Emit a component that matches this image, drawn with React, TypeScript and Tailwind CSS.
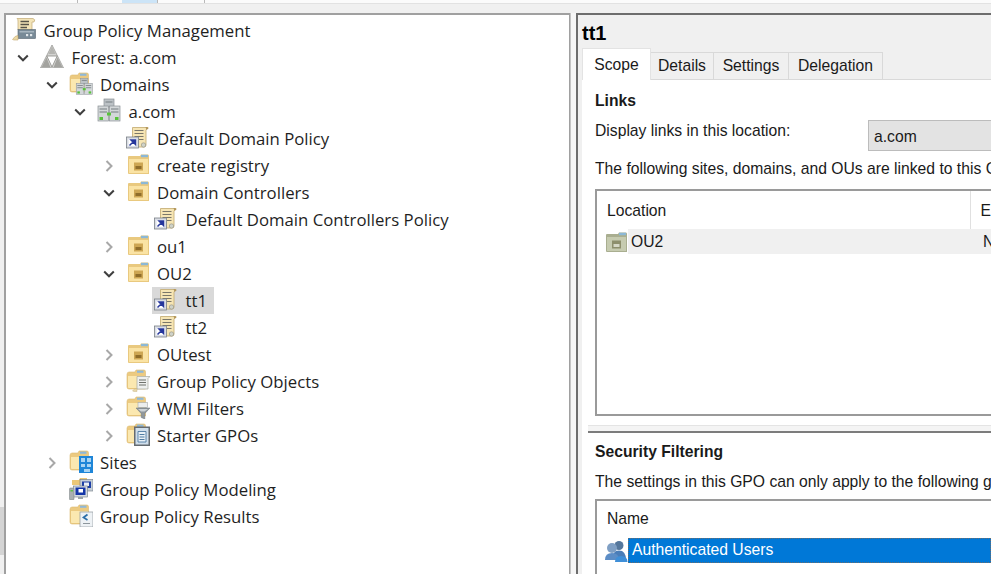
import type { ReactNode } from "react";

type Kind = "root" | "forest" | "domains" | "domain" | "gpo" | "ou" | "gpos" | "wmi" | "starter" | "sites" | "modeling" | "results";

type Node = {
  label: string;
  depth: number;
  kind: Kind;
  arrow?: "open" | "closed";
  selected?: boolean;
};

const NODES: Node[] = [
  { label: "Group Policy Management", depth: -1, kind: "root" },
  { label: "Forest: a.com", depth: 0, kind: "forest", arrow: "open" },
  { label: "Domains", depth: 1, kind: "domains", arrow: "open" },
  { label: "a.com", depth: 2, kind: "domain", arrow: "open" },
  { label: "Default Domain Policy", depth: 3, kind: "gpo" },
  { label: "create registry", depth: 3, kind: "ou", arrow: "closed" },
  { label: "Domain Controllers", depth: 3, kind: "ou", arrow: "open" },
  { label: "Default Domain Controllers Policy", depth: 4, kind: "gpo" },
  { label: "ou1", depth: 3, kind: "ou", arrow: "closed" },
  { label: "OU2", depth: 3, kind: "ou", arrow: "open" },
  { label: "tt1", depth: 4, kind: "gpo", selected: true },
  { label: "tt2", depth: 4, kind: "gpo" },
  { label: "OUtest", depth: 3, kind: "ou", arrow: "closed" },
  { label: "Group Policy Objects", depth: 3, kind: "gpos", arrow: "closed" },
  { label: "WMI Filters", depth: 3, kind: "wmi", arrow: "closed" },
  { label: "Starter GPOs", depth: 3, kind: "starter", arrow: "closed" },
  { label: "Sites", depth: 1, kind: "sites", arrow: "closed" },
  { label: "Group Policy Modeling", depth: 1, kind: "modeling" },
  { label: "Group Policy Results", depth: 1, kind: "results" },
];

function Svg({ children }: { children: ReactNode }) {
  return (
    <svg viewBox="0 0 24 24" className="mb-[4px] size-6 shrink-0">
      {children}
    </svg>
  );
}

function Folder() {
  return (
    <>
      <path d="M1 6.5Q1 4 3 4H9L10 2H18Q19.5 2 19.5 4V21H3Q1 21 1 19Z" fill="#ecca80" stroke="#dcb96e" strokeWidth="0.6" />
      <path d="M2 8H19V20H3Q2 20 2 19Z" fill="#fbe8b0" />
      <rect x="11" y="2.6" width="6.5" height="2.2" fill="#8fb8d8" />
    </>
  );
}

function Servers() {
  return (
    <g>
      <rect x="7" y="1" width="10" height="8" fill="#bcc2c6" stroke="#8a9195" strokeWidth="0.7" />
      <rect x="1" y="8" width="10.5" height="15" fill="#d3d7d9" stroke="#8a9195" strokeWidth="0.7" />
      <rect x="12.5" y="8" width="10.5" height="15" fill="#d3d7d9" stroke="#8a9195" strokeWidth="0.7" />
      <path d="M2.5 11H10M14 11H21.5M2.5 14H10M14 14H21.5M8.5 4H15.5" stroke="#747c80" strokeWidth="1.1" />
      <rect x="2.5" y="19" width="3.5" height="3" fill="#58c23c" />
      <rect x="18" y="19" width="3.5" height="3" fill="#58c23c" />
      <rect x="10" y="14.5" width="4" height="3" fill="#58c23c" />
    </g>
  );
}

function Gpo() {
  return (
    <>
      <path d="M6.5 2.5H22L20 5V20Q20 22 18 22H6.5Z" fill="#f6e5b4" stroke="#c2a86e" strokeWidth="0.8" />
      <path d="M8.5 5.5H17.5M8.5 8.5H17.5M8.5 11.5H17.5M13 14.5H17.5" stroke="#7a776a" strokeWidth="1.2" />
      <path d="M19.5 2Q22.5 1.5 22.5 3.5L20.5 5Z" fill="#b3975c" />
      <rect x="0.5" y="12" width="12" height="11" fill="#d9dde5" stroke="#7b8187" strokeWidth="0.8" />
      <rect x="2.5" y="14" width="8" height="7" fill="#fff" />
      <path d="M3.5 20.5L7 17M5 15H9.5V19.5Z" stroke="#27379c" strokeWidth="1.5" fill="#27379c" />
      <circle cx="17.5" cy="20" r="2.2" fill="#cfd2c8" stroke="#918f7f" strokeWidth="0.6" />
    </>
  );
}

function Ou({ muted }: { muted?: boolean }) {
  return (
    <>
      <path d="M2 5Q2 4 3 4H14L15 2.5H22Q23 2.5 23 4V22H3Q2 22 2 21Z" fill={muted ? "#a9ae90" : "#e9c97f"} />
      <path d="M3 7H22V21H3Z" fill={muted ? "#c6cbb0" : "#fae3a4"} />
      <rect x="15" y="2.8" width="7" height="2.4" fill="#8cb8d6" />
      <rect x="8" y="10.5" width="9" height="8" fill={muted ? "#8d8f6c" : "#cda653"} />
      <rect x="9.5" y="14" width="6" height="3" fill={muted ? "#d6d8c6" : "#8f6d2a"} />
    </>
  );
}

function TreeIcon({ kind }: { kind: Kind }) {
  switch (kind) {
    case "root":
      return (
        <Svg>
          <path d="M5 1.5H21Q24 2.5 22 5H20V13H6V4Q6 2 5 1.5Z" fill="#f3e4b8" stroke="#c2a974" strokeWidth="0.7" />
          <path d="M8.5 4.5H17M8.5 7.5H17M8.5 10.5H15" stroke="#55534a" strokeWidth="1.3" />
          <rect x="6" y="12.5" width="17.5" height="9" fill="#788a97" stroke="#556470" strokeWidth="0.6" />
          <rect x="7.5" y="14" width="14.5" height="1.5" fill="#a7b5bf" />
          <rect x="14" y="17" width="2.2" height="2.2" fill="#e1e6e9" />
          <rect x="18" y="17" width="2.2" height="2.2" fill="#e1e6e9" />
          <path d="M0.5 22.5Q3 18.5 6 18.5V23H2Z" fill="#ecd9a5" stroke="#c2a974" strokeWidth="0.6" />
        </Svg>
      );
    case "forest":
      return (
        <Svg>
          <path d="M12 1L0.5 24H23.5Z" fill="#d4d4d2" stroke="#9b9b97" strokeWidth="0.8" />
          <path d="M6.8 12H17.2L12 23Z" fill="#fff" stroke="#8b8b87" strokeWidth="0.8" />
          <path d="M12 2L8.5 10H15.5Z" fill="#b5b5b1" />
          <path d="M1.5 23.5L6.5 13.5L10.5 23.5ZM22.5 23.5L17.5 13.5L13.5 23.5Z" fill="#a3a39f" />
        </Svg>
      );
    case "domains":
      return (
        <Svg>
          <Folder />
          <g transform="translate(6.5 6.5) scale(0.73)">
            <Servers />
          </g>
        </Svg>
      );
    case "domain":
      return (
        <Svg>
          <Servers />
        </Svg>
      );
    case "gpo":
      return (
        <Svg>
          <Gpo />
        </Svg>
      );
    case "ou":
      return (
        <Svg>
          <Ou />
        </Svg>
      );
    case "gpos":
      return (
        <Svg>
          <Folder />
          <path d="M11 8.5H24L22 10.5V21H11Z" fill="#eef0ef" stroke="#a6a99f" strokeWidth="0.7" />
          <path d="M13 12H20M13 14.5H20M13 17H20" stroke="#6f726c" strokeWidth="1.1" />
          <path d="M6.5 23Q9 19.5 11 20.5V23.5H8Z" fill="#e7d8aa" stroke="#bfa976" strokeWidth="0.4" />
        </Svg>
      );
    case "wmi":
      return (
        <Svg>
          <Folder />
          <rect x="12" y="7.5" width="9.5" height="5" fill="#eceeee" stroke="#a4a8a9" strokeWidth="0.6" />
          <path d="M10 13H24L18.8 18.5V24L15.2 22.5V18.5Z" fill="#8f979c" stroke="#6f777c" strokeWidth="0.5" />
          <path d="M12 14H22L18.5 16.5H15Z" fill="#ccd2d6" />
        </Svg>
      );
    case "starter":
      return (
        <Svg>
          <Folder />
          <rect x="8" y="4.5" width="16" height="19.5" fill="#656b70" />
          <rect x="9.5" y="6" width="13" height="16.5" fill="#cfdeeb" />
          <path d="M12 9.5H20V20H12Z" fill="#e9f1f7" stroke="#4f7ca3" strokeWidth="0.9" />
          <path d="M13.5 12.5H18.5M13.5 15H18.5M13.5 17.5H18.5" stroke="#4f7ca3" strokeWidth="1.1" />
        </Svg>
      );
    case "sites":
      return (
        <Svg>
          <Folder />
          <rect x="10" y="7" width="14" height="17" fill="#1f86d8" />
          <path d="M12 9H16V13H12ZM18 9H22V13H18ZM12 15H16V18H12ZM18 15H22V18H18ZM15 20H21V23H15Z" fill="#a9d4f3" />
        </Svg>
      );
    case "modeling":
      return (
        <Svg>
          <path d="M3 4H10L11 2H18V9H3Z" fill="#ecc878" />
          <rect x="11" y="3.5" width="13" height="11.5" fill="#c6cfd7" stroke="#6f7880" strokeWidth="0.6" />
          <rect x="13" y="5.5" width="9" height="6.5" fill="#1d3fa6" />
          <path d="M15 6.5H20V10H15Z" fill="#e8eef5" />
          <rect x="4.5" y="10" width="14" height="11" fill="#d4dbe1" stroke="#6f7880" strokeWidth="0.6" />
          <rect x="6.5" y="11.5" width="10" height="7.5" fill="#1436a8" />
          <rect x="9.5" y="13" width="4.5" height="3.5" fill="#fff" />
          <path d="M9 21H14V23H9Z" fill="#9aa3aa" />
          <rect x="0.5" y="12" width="4.5" height="12" rx="1" fill="#a9afb1" stroke="#767c7e" strokeWidth="0.5" />
          <rect x="1.5" y="14" width="2.5" height="1.5" fill="#61c04b" />
        </Svg>
      );
    case "results":
      return (
        <Svg>
          <Folder />
          <rect x="11" y="9" width="13" height="15" fill="#eef2f5" stroke="#8d969c" strokeWidth="0.7" />
          <path d="M18.5 11.5L14.5 14.5L18.5 17" fill="none" stroke="#2c6ea8" strokeWidth="1.7" />
          <path d="M14 20.5H21" stroke="#8d969c" strokeWidth="1" />
        </Svg>
      );
  }
}

function Arrow({ type }: { type?: "open" | "closed" }) {
  if (!type) return <span className="w-4 shrink-0" />;
  return (
    <svg viewBox="0 0 16 16" className="h-4 w-4 shrink-0">
      {type === "open" ? (
        <path d="M3.2 5.5L8 10.3L12.8 5.5" fill="none" stroke="#3f3f3f" strokeWidth="2" />
      ) : (
        <path d="M5.5 3L10.5 8L5.5 13" fill="none" stroke="#a8a8a8" strokeWidth="2" />
      )}
    </svg>
  );
}

function TreeRow({ node }: { node: Node }) {
  // each level sits 28.5px further in
  const left = node.depth < 0 ? 4 : 9 + node.depth * 28.5;
  return (
    <div className="flex h-[27px] items-center" style={{ paddingLeft: left }}>
      {node.depth >= 0 && <Arrow type={node.arrow} />}
      <div
        className={
          "flex h-[27px] items-center pl-[2px] pr-[7px] " +
          (node.depth >= 0 ? "ml-[7px] " : "") +
          (node.selected ? "bg-[#d9d9d9]" : "")
        }
      >
        <TreeIcon kind={node.kind} />
        <span className="ml-[7.5px] whitespace-nowrap">{node.label}</span>
      </div>
    </div>
  );
}

function ActiveTab({ label }: { label: string }) {
  return (
    <div className="relative z-10 -mb-px flex h-[32px] w-[69px] items-start justify-center border-t border-r border-l border-[#e3e3e3] bg-white pt-[4px]">
      {label}
    </div>
  );
}

function Tab({ label, width }: { label: string; width: string }) {
  return (
    <div className={"flex h-[27px] items-center justify-center border-t border-r border-[#d9d9d9] bg-[#f0f0f0] pb-[1px] " + width}>
      {label}
    </div>
  );
}

export default function App() {
  return (
    <div className="flex h-[574px] w-[991px] flex-col overflow-hidden bg-[#f0f0f0] font-['Liberation_Sans',sans-serif] text-[15.7px] text-[#1a1a1a]">
      {/* mmc toolbar remains */}
      <div className="flex h-[4px] shrink-0 border-b border-[#e2e2e2] bg-[#fbfbfb]">
        <div className="w-[78px] border-r border-[#b9b9b9]" />
        <div className="w-[44px]" />
        <div className="w-[35px] bg-[#cce4f7]" />
        <div className="w-[48px] border-r border-l border-[#b9b9b9]" />
      </div>
      <div className="flex min-h-0 flex-1 pt-[9px]">
        <div className="flex w-[4px] shrink-0 flex-col">
          <div className="h-[494px]" />
          <div className="h-[48px] bg-[#d4d4d4]" />
        </div>
        {/* tree */}
        <div className="h-full w-[566px] shrink-0 border-t-2 border-r border-l-2 border-[#a0a0a0] bg-white pt-[2px] font-['Open_Sans',sans-serif] text-[16.75px] text-[#1f1f1f]">
          {NODES.map((n) => (
            <TreeRow key={n.label + n.depth} node={n} />
          ))}
        </div>
        <div className="w-[1px] shrink-0 bg-[#c4c4c4]" />
        <div className="w-[5px] shrink-0 bg-[#f6f6f6]" />
        {/* details */}
        <div className="min-w-0 flex-1 border-t-2 border-l-2 border-[#6d6d6d] pl-[4px]">
          <div className="h-[33px] pt-[5px] text-[20px] leading-[26px] font-bold text-black">tt1</div>
          <div className="flex items-end border-b border-[#d9d9d9]">
            <ActiveTab label="Scope" />
            <Tab label="Details" width="w-[63px]" />
            <Tab label="Settings" width="w-[75px]" />
            <Tab label="Delegation" width="w-[94px]" />
          </div>
          <div className="bg-white">
            <div className="h-[345px] pl-[13px] whitespace-nowrap">
              <div className="pt-[12px] leading-[18px] font-bold">Links</div>
              <div className="mt-[10px] flex h-[31px] items-start">
                <span className="w-[273px] shrink-0 pt-[2px] leading-[18px]">Display links in this location:</span>
                <div className="flex h-[31px] flex-1 items-center border border-r-0 border-[#bcbcbc] bg-[#e3e3e3] pt-[2px] pl-[5px]">a.com</div>
              </div>
              <div className="mt-[9px] leading-[18px]">The following sites, domains, and OUs are linked to this GPO:</div>
              <div className="mt-[11px] h-[227px] border-2 border-r-0 border-[#9a9a9a]">
                <div className="flex h-[38px]">
                  <div className="flex w-[377px] items-center border-r border-[#e0e0e0] pt-[2px] pl-[10px]">Location</div>
                  <div className="flex flex-1 items-center pt-[2px] pl-[10px]">E</div>
                </div>
                <div className="flex h-[25px] items-center pl-[7px]">
                  <svg viewBox="0 0 24 24" className="size-6 shrink-0">
                    <Ou muted />
                  </svg>
                  <div className="flex h-[25px] flex-1 items-center bg-[#f0f0f0] pl-[3px]">
                    <span className="w-[352px] shrink-0">OU2</span>
                    <span>N</span>
                  </div>
                </div>
              </div>
            </div>
            {/* splitter */}
            <div className="bg-white pl-[6px]">
              <div className="h-[8px] border-t border-[#e4e4e4] bg-[#f4f4f4]">
                <div className="mt-[5px] h-[2px] bg-[#7c7c7c]" />
              </div>
            </div>
            <div className="h-[200px] pl-[13px] whitespace-nowrap">
              <div className="pt-[10px] leading-[18px] font-bold">Security Filtering</div>
              <div className="mt-[12px] leading-[18px]">The settings in this GPO can only apply to the following groups, users</div>
              <div className="mt-[8px] h-[100px] border-2 border-r-0 border-b-0 border-[#9a9a9a]">
                <div className="flex h-[37px] items-center pb-[2px] pl-[10px]">Name</div>
                <div className="flex h-[25px] items-center pl-[7px]">
                  <svg viewBox="0 0 24 24" className="size-6 shrink-0">
                    <circle cx="15" cy="6.5" r="4.5" fill="#55779c" />
                    <path d="M8 21Q8 11.5 15 11.5Q22 11.5 22 21Z" fill="#4a7db8" />
                    <circle cx="8" cy="9" r="5" fill="#7f9fc4" />
                    <path d="M1 21Q1 14 8 14Q15 14 15 21Z" fill="#5c8dc6" />
                    <path d="M11 23Q11 17 17 17Q23.5 17 23.5 23Z" fill="#3f8fd8" />
                  </svg>
                  <div className="flex h-[25px] flex-1 items-center border border-dotted border-[#6d6d6d] bg-[#0078d7] pb-[1px] pl-[3px] text-white">
                    Authenticated Users
                  </div>
                </div>
              </div>
            </div>
          </div>
        </div>
      </div>
    </div>
  );
}
